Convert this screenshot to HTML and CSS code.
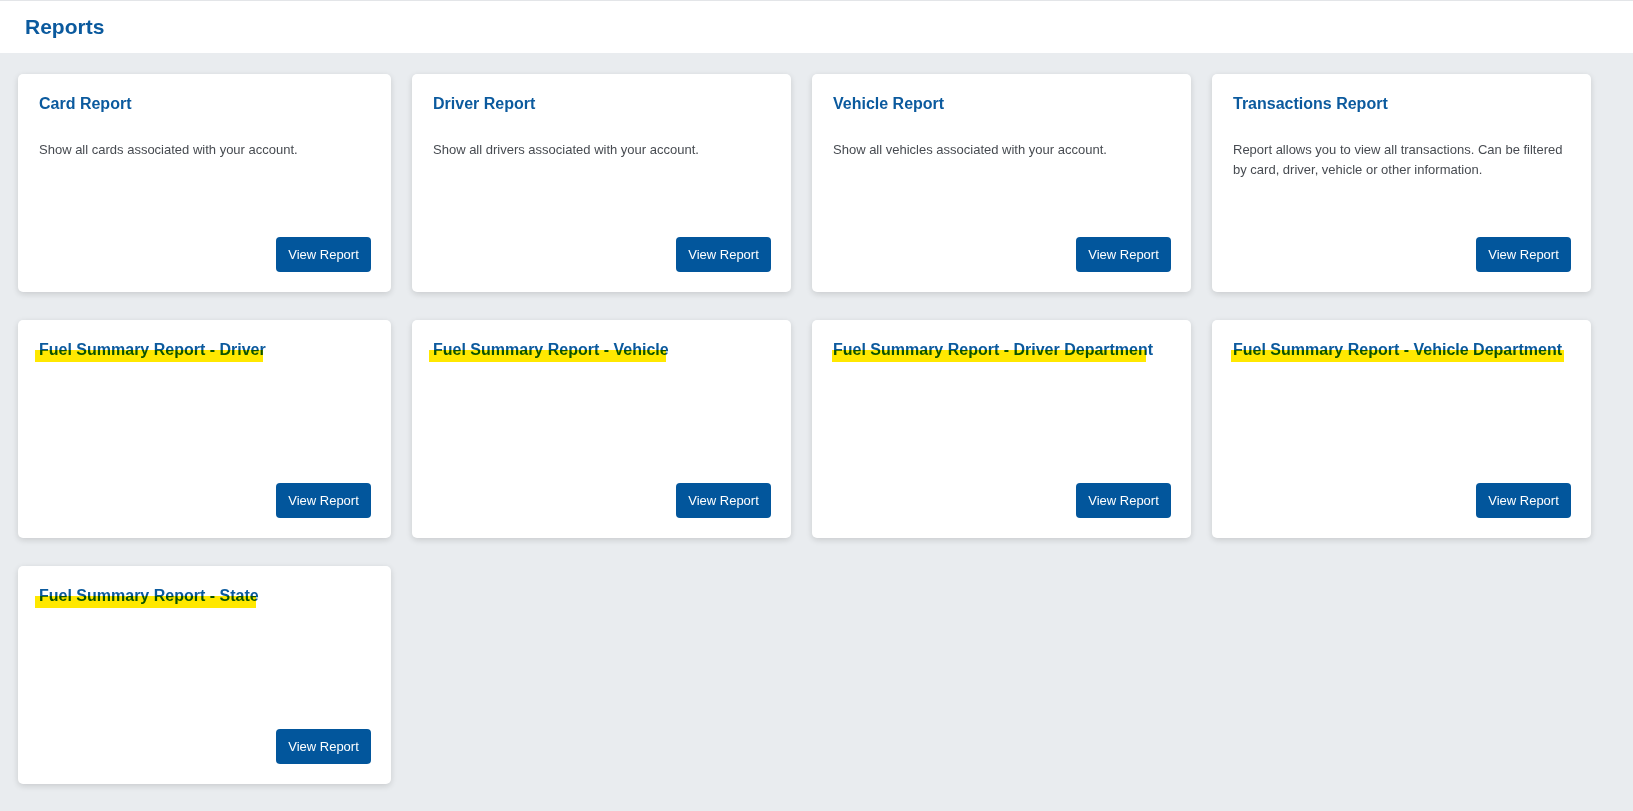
FILE: index.html
```html
<!DOCTYPE html>
<html lang="en">
<head>
<meta charset="utf-8">
<title>Reports</title>
<link rel="stylesheet" href="styles.css">
</head>
<body>
<header class="page-header">
  <h1 class="page-title">Reports</h1>
</header>
<main class="content">
  <div class="grid">
    <section class="card">
      <h2 class="card-title">Card Report</h2>
      <p class="card-desc">Show all cards associated with your account.</p>
      <div class="card-actions"><button class="btn">View Report</button></div>
    </section>
    <section class="card">
      <h2 class="card-title">Driver Report</h2>
      <p class="card-desc">Show all drivers associated with your account.</p>
      <div class="card-actions"><button class="btn">View Report</button></div>
    </section>
    <section class="card">
      <h2 class="card-title">Vehicle Report</h2>
      <p class="card-desc">Show all vehicles associated with your account.</p>
      <div class="card-actions"><button class="btn">View Report</button></div>
    </section>
    <section class="card">
      <h2 class="card-title">Transactions Report</h2>
      <p class="card-desc">Report allows you to view all transactions. Can be filtered by card, driver, vehicle or other information.</p>
      <div class="card-actions"><button class="btn">View Report</button></div>
    </section>
    <section class="card">
      <h2 class="card-title"><span class="hl">Fuel Summary Report - Driver</span></h2>
      <div class="card-actions"><button class="btn">View Report</button></div>
    </section>
    <section class="card">
      <h2 class="card-title"><span class="hl">Fuel Summary Report - Vehicle</span></h2>
      <div class="card-actions"><button class="btn">View Report</button></div>
    </section>
    <section class="card">
      <h2 class="card-title"><span class="hl hl-short">Fuel Summary Report - Driver Department</span></h2>
      <div class="card-actions"><button class="btn">View Report</button></div>
    </section>
    <section class="card">
      <h2 class="card-title"><span class="hl hl-long">Fuel Summary Report - Vehicle Department</span></h2>
      <div class="card-actions"><button class="btn">View Report</button></div>
    </section>
    <section class="card">
      <h2 class="card-title"><span class="hl">Fuel Summary Report - State</span></h2>
      <div class="card-actions"><button class="btn">View Report</button></div>
    </section>
  </div>
</main>
</body>
</html>
```

FILE: styles.css
```css
* { box-sizing: border-box; }

html, body {
  margin: 0;
  padding: 0;
  height: 100%;
}

body {
  font-family: "Liberation Sans", Arial, sans-serif;
  background: #e9ecef;
  border-top: 1px solid #e3e5e8;
  display: flex;
  flex-direction: column;
}

.page-header {
  background: #ffffff;
  height: 52px;
  padding: 14px 25px 0;
}

.page-title {
  margin: 0;
  font-size: 21px;
  font-weight: bold;
  line-height: 24px;
  color: #0b5a9e;
}

.content {
  flex: 1;
  background: #e9ecef;
  padding: 21px 18px 20px;
}

.grid {
  display: grid;
  grid-template-columns: 373px 379px 379px 379px;
  grid-auto-rows: 218px;
  column-gap: 21px;
  row-gap: 28px;
}

.card {
  background: #ffffff;
  border-radius: 5px;
  box-shadow: 0 2px 6px rgba(0, 0, 0, 0.14);
  padding: 21px 20px 20px 21px;
  display: flex;
  flex-direction: column;
}

.card-title {
  margin: 0 0 27px;
  font-size: 16px;
  font-weight: bold;
  line-height: 18px;
  color: #0b5a9e;
}

.card-desc {
  margin: 0;
  font-size: 13px;
  line-height: 19.5px;
  color: #474b51;
}

.card-actions {
  margin-top: auto;
  display: flex;
  justify-content: flex-end;
}

.btn {
  font-family: "Liberation Sans", Arial, sans-serif;
  font-size: 13px;
  line-height: 17px;
  color: #ffffff;
  background: #02569c;
  border: none;
  border-radius: 4px;
  padding: 9px 12px;
  width: 95px;
  height: 35px;
  cursor: pointer;
}

.hl {
  position: relative;
  display: inline-block;
}

.hl::after {
  content: "";
  position: absolute;
  left: -4px;
  right: 3px;
  top: 9px;
  bottom: -3px;
  background: #ffe800;
  mix-blend-mode: multiply;
}

.hl-short::after {
  left: -1px;
  right: 7px;
}

.hl-long::after {
  left: -2px;
  right: -2px;
}
```
